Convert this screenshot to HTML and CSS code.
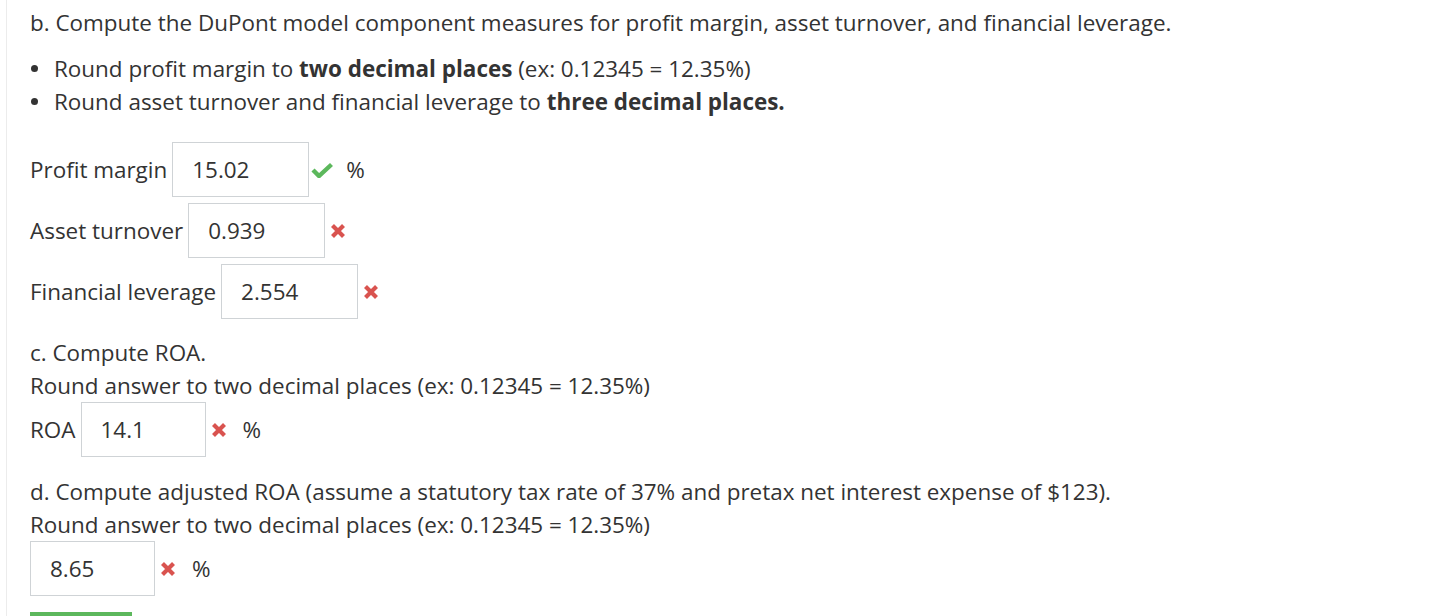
FILE: index.html
```html
<!DOCTYPE html>
<html>
<head>
<meta charset="utf-8">
<link rel="stylesheet" href="styles.css">
</head>
<body>
<div class="page">
  <div class="part">
    <p class="line">b. Compute the DuPont model component measures for profit margin, asset turnover, and financial leverage.</p>
    <ul class="bullets">
      <li>Round profit margin to <b>two decimal places</b> (ex: 0.12345 = 12.35%)</li>
      <li>Round asset turnover and financial leverage to <b>three decimal places.</b></li>
    </ul>
    <div class="rows">
      <div class="row">
        <span class="label">Profit margin</span>
        <span class="field">15.02</span>
        <span class="icon"><svg width="22" height="16" viewBox="0 0 22 16"><path d="M2 8 L8 14 L20.5 2.5" fill="none" stroke="#5cb85c" stroke-width="4.4" stroke-linejoin="miter"/></svg></span>
        <span class="unit">%</span>
      </div>
      <div class="row">
        <span class="label">Asset turnover</span>
        <span class="field">0.939</span>
        <span class="icon"><svg class="x" width="16" height="16" viewBox="0 0 16 16"><path d="M2.5 2.5 L13.5 13.5 M13.5 2.5 L2.5 13.5" fill="none" stroke="#d9534f" stroke-width="4.2"/></svg></span>
      </div>
      <div class="row">
        <span class="label">Financial leverage</span>
        <span class="field">2.554</span>
        <span class="icon"><svg class="x" width="16" height="16" viewBox="0 0 16 16"><path d="M2.5 2.5 L13.5 13.5 M13.5 2.5 L2.5 13.5" fill="none" stroke="#d9534f" stroke-width="4.2"/></svg></span>
      </div>
    </div>
  </div>
  <div class="part part-c">
    <p class="line">c. Compute ROA.</p>
    <p class="line">Round answer to two decimal places (ex: 0.12345 = 12.35%)</p>
    <div class="row">
      <span class="label">ROA</span>
      <span class="field field-sm">14.1</span>
      <span class="icon"><svg class="x" width="16" height="16" viewBox="0 0 16 16"><path d="M2.5 2.5 L13.5 13.5 M13.5 2.5 L2.5 13.5" fill="none" stroke="#d9534f" stroke-width="4.2"/></svg></span>
      <span class="unit">%</span>
    </div>
  </div>
  <div class="part part-d">
    <p class="line">d. Compute adjusted ROA (assume a statutory tax rate of 37% and pretax net interest expense of $123).</p>
    <p class="line">Round answer to two decimal places (ex: 0.12345 = 12.35%)</p>
    <div class="row">
      <span class="field field-sm">8.65</span>
      <span class="icon"><svg class="x" width="16" height="16" viewBox="0 0 16 16"><path d="M2.5 2.5 L13.5 13.5 M13.5 2.5 L2.5 13.5" fill="none" stroke="#d9534f" stroke-width="4.2"/></svg></span>
      <span class="unit">%</span>
    </div>
  </div>
  <div class="button"></div>
</div>
</body>
</html>
```

FILE: styles.css
```css
html, body {
  margin: 0;
  padding: 0;
  background: #ffffff;
}
body {
  font-family: "Open Sans", "Liberation Sans", sans-serif;
  font-size: 22.45px;
  color: #333333;
  overflow: hidden;
  height: 616px;
}
.page {
  margin-left: 6px;
  border-left: 1px solid #ececec;
  padding: 6px 0 0 23px;
  height: 610px;
  overflow: hidden;
}
.line {
  margin: 0;
  line-height: 33px;
}
.bullets {
  list-style: none;
  margin: 13px 0 0 0;
  padding: 0;
}
.bullets li {
  position: relative;
  line-height: 33px;
  padding-left: 24px;
}
.bullets li::before {
  content: "";
  position: absolute;
  left: 1px;
  top: 13px;
  width: 7px;
  height: 7px;
  border-radius: 50%;
  background: #333333;
}
.bullets b {
  font-weight: 700;
}
.rows {
  margin-top: 24px;
  display: flex;
  flex-direction: column;
  gap: 6px;
}
.row {
  display: flex;
  align-items: center;
  height: 55px;
}
.label {
  line-height: 33px;
  margin-right: 5px;
}
.field {
  box-sizing: border-box;
  width: 137px;
  height: 55px;
  border: 1px solid #cfd3d6;
  padding-left: 19px;
  display: flex;
  align-items: center;
  line-height: 33px;
}
.field-sm {
  width: 125px;
}
.icon {
  width: 22px;
  margin-left: 2px;
  display: flex;
  justify-content: center;
  align-items: center;
}
.unit {
  margin-left: 13px;
  line-height: 33px;
}
.part-c {
  margin-top: 17px;
}
.part-d {
  margin-top: 18px;
}
.button {
  margin-top: 16px;
  width: 102px;
  height: 40px;
  background: #5cb85c;
}
```
